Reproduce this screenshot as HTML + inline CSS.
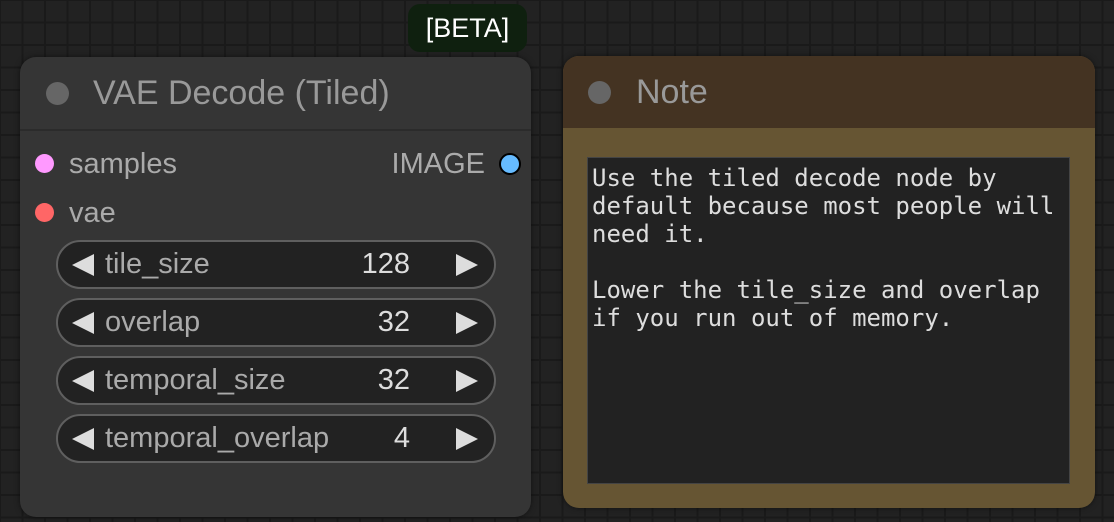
<!DOCTYPE html>
<html><head><meta charset="utf-8"><style>
*{margin:0;padding:0;box-sizing:border-box}
body{width:1114px;height:522px;overflow:hidden;position:relative;font-family:"Liberation Sans",sans-serif;
background-color:#222;
background-image:linear-gradient(#1a1a1a 2px,transparent 2px),linear-gradient(90deg,#1a1a1a 2px,transparent 2px);
background-size:22.5px 22.5px;background-position:-1px -1px}
.abs{position:absolute}
.node{position:absolute;left:20px;top:57px;width:511px;height:460px;background:#353535;border-radius:16px;box-shadow:0 0 6px rgba(0,0,0,.5)}
.title{position:absolute;left:0;top:0;width:100%;height:74px;border-bottom:2px solid #2b2b2b}
.dot{position:absolute;border-radius:50%}
.tt{position:absolute;color:#999;font-size:34px;white-space:nowrap}
.lbl{position:absolute;color:#aaa;font-size:29px;white-space:nowrap}
.w{position:absolute;left:36px;width:440px;height:49px;border:2px solid #5f5f5f;border-radius:25px;background:#222}
.w .n{position:absolute;left:47px;top:6px;color:#aaa;font-size:29px;white-space:nowrap}
.w .v{position:absolute;right:84px;top:6px;color:#ddd;font-size:29px}
.w .l{position:absolute;left:14px;top:12px;width:0;height:0;border-top:11px solid transparent;border-bottom:11px solid transparent;border-right:22px solid #ddd}
.w .r{position:absolute;right:16px;top:12px;width:0;height:0;border-top:11px solid transparent;border-bottom:11px solid transparent;border-left:22px solid #ddd}
.note{position:absolute;left:563px;top:56px;width:532px;height:452px;background:#665533;border-radius:16px;overflow:hidden;box-shadow:0 0 6px rgba(0,0,0,.5)}
.nt{position:absolute;left:0;top:0;width:100%;height:72px;background:#443322}
.ta{position:absolute;left:24px;top:101px;width:483px;height:327px;background:#222;border:1px solid #444;color:#ddd;font-family:"DejaVu Sans Mono","Liberation Mono",monospace;font-size:24px;line-height:28px;padding:6px 0 0 4px;white-space:pre}
</style></head><body>
<div class="abs" style="left:408px;top:4px;width:119px;height:48px;background:#0f200f;border-radius:12px;color:#fff;font-size:27px;text-align:center;line-height:48px">[BETA]</div>
<div class="node">
 <div class="title"></div>
 <div class="dot" style="left:26px;top:25px;width:23px;height:23px;background:#666"></div>
 <div class="tt" style="left:73px;top:17px">VAE Decode (Tiled)</div>
 <div class="dot" style="left:15px;top:97px;width:19px;height:19px;background:#f9f"></div>
 <div class="lbl" style="left:49px;top:91px">samples</div>
 <div class="lbl" style="right:46px;top:91px">IMAGE</div>
 <div class="dot" style="left:479px;top:96px;width:22px;height:22px;background:#6bf;border:2px solid #000"></div>
 <div class="dot" style="left:15px;top:146px;width:19px;height:19px;background:#f66"></div>
 <div class="lbl" style="left:49px;top:140px">vae</div>
 <div class="w" style="top:183px"><div class="l"></div><div class="n">tile_size</div><div class="v">128</div><div class="r"></div></div>
 <div class="w" style="top:241px"><div class="l"></div><div class="n">overlap</div><div class="v">32</div><div class="r"></div></div>
 <div class="w" style="top:299px"><div class="l"></div><div class="n">temporal_size</div><div class="v">32</div><div class="r"></div></div>
 <div class="w" style="top:357px"><div class="l"></div><div class="n">temporal_overlap</div><div class="v">4</div><div class="r"></div></div>
</div>
<div class="note">
 <div class="nt"></div>
 <div class="dot" style="left:25px;top:25px;width:23px;height:23px;background:#666"></div>
 <div class="tt" style="left:73px;top:17px">Note</div>
 <div class="ta">Use the tiled decode node by
default because most people will
need it.

Lower the tile_size and overlap
if you run out of memory.</div>
</div>
</body></html>
